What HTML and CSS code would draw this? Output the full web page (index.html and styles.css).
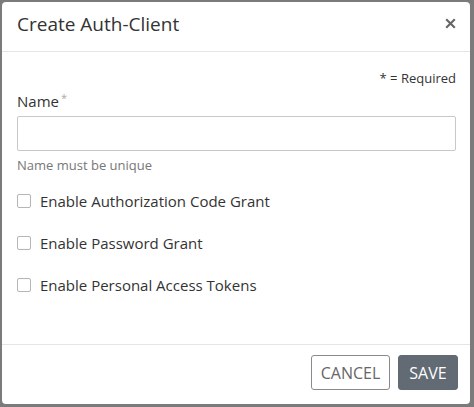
FILE: index.html
```html
<!DOCTYPE html>
<html>
<head>
<meta charset="utf-8">
<link rel="stylesheet" href="styles.css">
</head>
<body>
<div class="modal">
  <div class="modal-header">
    <h1 class="title">Create Auth-Client</h1>
    <button class="close" aria-label="Close">
      <svg width="11" height="11" viewBox="0 0 11 11"><path d="M1.2 1.2 L9.8 9.8 M9.8 1.2 L1.2 9.8" stroke="#666" stroke-width="2.1" stroke-linecap="butt"/></svg>
    </button>
  </div>
  <div class="modal-body">
    <div class="required-note">* = Required</div>
    <label class="field-label">Name<span class="star">*</span></label>
    <input class="text-input" type="text">
    <div class="help">Name must be unique</div>
    <div class="checks">
      <label class="check"><span class="box"></span>Enable Authorization Code Grant</label>
      <label class="check"><span class="box"></span>Enable Password Grant</label>
      <label class="check"><span class="box"></span>Enable Personal Access Tokens</label>
    </div>
  </div>
  <div class="modal-footer">
    <button class="btn btn-cancel">CANCEL</button>
    <button class="btn btn-save">SAVE</button>
  </div>
</div>
</body>
</html>
```
FILE: styles.css
```css
html, body {
  margin: 0;
  padding: 0;
}
body {
  background: #7b7b7b;
  width: 474px;
  height: 407px;
  overflow: hidden;
  font-family: "Open Sans", "Noto Sans", sans-serif;
  color: #333;
}
.modal {
  margin: 2px 0 0 2px;
  width: 468px;
  height: 402px;
  background: #fff;
  border-radius: 4px;
  display: flex;
  flex-direction: column;
  box-sizing: border-box;
}
.modal-header {
  height: 50px;
  box-sizing: border-box;
  border-bottom: 1px solid #e5e5e5;
  display: flex;
  align-items: center;
  justify-content: space-between;
  padding: 0 14px 4px 15px;
}
.title {
  margin: 0;
  font-size: 19px;
  font-weight: 400;
  line-height: 27px;
  color: #333;
}
.close {
  border: 0;
  background: none;
  padding: 0;
  width: 11px;
  height: 11px;
  display: flex;
  margin-bottom: 3px;
  cursor: pointer;
}
.modal-body {
  flex: 1;
  padding: 17px 14px 0 15px;
  display: flex;
  flex-direction: column;
}
.required-note {
  font-size: 13px;
  line-height: 18px;
  text-align: right;
  color: #333;
}
.field-label {
  margin-top: 4px;
  font-size: 15px;
  line-height: 20px;
  color: #333;
}
.star {
  color: #aaa;
  font-size: 11px;
  vertical-align: top;
  position: relative;
  top: -3px;
  margin-left: 2px;
}
.text-input {
  margin-top: 5px;
  height: 35px;
  box-sizing: border-box;
  border: 1px solid #c8c8c8;
  border-radius: 2px;
  font-family: inherit;
  font-size: 15px;
  padding: 0 8px;
}
.help {
  margin-top: 5px;
  font-size: 13px;
  line-height: 18px;
  color: #777;
}
.checks {
  margin-top: 17px;
  display: flex;
  flex-direction: column;
  gap: 22px;
}
.check {
  display: flex;
  align-items: center;
  gap: 9px;
  font-size: 15px;
  line-height: 20px;
  color: #333;
}
.box {
  width: 14px;
  height: 14px;
  box-sizing: border-box;
  border: 1px solid #b5b5b5;
  border-radius: 2px;
  background: #fff;
}
.modal-footer {
  height: 60px;
  box-sizing: border-box;
  border-top: 1px solid #e5e5e5;
  display: flex;
  justify-content: flex-end;
  align-items: flex-start;
  gap: 8px;
  padding: 10px 12px 0 0;
}
.btn {
  height: 35px;
  box-sizing: border-box;
  border-radius: 3px;
  font-family: "Open Sans", "Noto Sans", sans-serif;
  font-size: 16px;
  padding: 0;
  cursor: pointer;
}
.btn-cancel {
  width: 79px;
  background: #fff;
  border: 1px solid #8a8a8a;
  color: #666;
}
.btn-save {
  width: 60px;
  background: #626a74;
  border: 1px solid #626a74;
  color: #fff;
}
```
